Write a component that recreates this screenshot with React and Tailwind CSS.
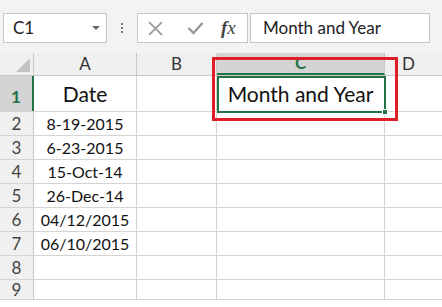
import React from "react";

const font = { fontFamily: "Lato, 'Open Sans', 'Liberation Sans', sans-serif" };

const rows = [
  { n: "1", a: "Date", h: "h-[36px]", big: true },
  { n: "2", a: "8-19-2015" },
  { n: "3", a: "6-23-2015" },
  { n: "4", a: "15-Oct-14" },
  { n: "5", a: "26-Dec-14" },
  { n: "6", a: "04/12/2015" },
  { n: "7", a: "06/10/2015" },
  { n: "8", a: "" },
  { n: "9", a: "", h: "h-[20px]" },
];

export default function App() {
  return (
    <div className="relative w-[442px] h-[307px] bg-white overflow-hidden" style={font}>
      {/* Formula bar */}
      <div className="h-[53px] bg-[#f3f3f3] flex items-start pt-[13px] pl-[3px]">
        <div className="w-[104px] h-[30px] bg-white border border-[#c6c6c6] flex items-center justify-between pl-[9px] pr-[6px]">
          <span className="text-[17px] text-[#222]">C1</span>
          <svg width="8" height="5" viewBox="0 0 8 5"><path d="M0 0 L8 0 L4 4 Z" fill="#666" /></svg>
        </div>
        <div className="w-[30px] h-[30px] flex flex-col items-center justify-center gap-[2px]">
          <span className="w-[2px] h-[2px] bg-[#777]" />
          <span className="w-[2px] h-[2px] bg-[#777]" />
          <span className="w-[2px] h-[2px] bg-[#777]" />
        </div>
        <div className="w-[111px] h-[30px] bg-white border border-[#c6c6c6] flex items-center">
          <svg className="ml-[10px]" width="15" height="15" viewBox="0 0 14 14">
            <path d="M1 1 L13 13 M13 1 L1 13" stroke="#9a9a9a" strokeWidth="1.6" />
          </svg>
          <svg className="ml-[24px]" width="17" height="14" viewBox="0 0 16 14">
            <path d="M1 7 L6 12 L15 2" stroke="#9a9a9a" strokeWidth="2.4" fill="none" />
          </svg>
          <span className="ml-[17px] text-[19px] italic text-[#444]" style={{ fontFamily: "'Liberation Serif', 'DejaVu Serif', serif" }}>
            <span className="font-bold">f</span>x
          </span>
        </div>
        <div className="ml-[2px] w-[180px] h-[30px] bg-white border border-[#c6c6c6] flex items-center pl-[12px]">
          <span className="text-[17px] text-[#222]">Month and Year</span>
        </div>
      </div>

      {/* Grid */}
      <div className="flex flex-col">
        {/* Column headers */}
        <div className="flex h-[23px] bg-[#f0f0f0] border-b border-[#c8c8c8]">
          <div className="w-[34px] border-r border-[#c8c8c8] relative">
            <svg className="absolute right-[3px] bottom-[3px]" width="14" height="14" viewBox="0 0 14 14">
              <path d="M14 0 L14 14 L0 14 Z" fill="#c4c4c4" />
            </svg>
          </div>
          <div className="w-[103px] border-r border-[#c8c8c8] flex items-center justify-center text-[17px] text-[#333]">A</div>
          <div className="w-[80px] border-r border-[#c8c8c8] flex items-center justify-center text-[17px] text-[#333]">B</div>
          <div className="w-[168px] border-r border-[#c8c8c8] bg-[#d4d4d4] border-b-2 border-b-[#217346] flex items-center justify-center text-[17px] font-bold text-[#217346]">C</div>
          <div className="flex-1 flex items-center justify-center text-[17px] text-[#333] pr-[10px]">D</div>
        </div>
        {rows.map((r) => (
          <div key={r.n} className={`flex ${r.h || "h-[24px]"} border-b border-[#d4d4d4]`}>
            <div
              className={`w-[34px] flex ${r.n === "1" ? "items-end pb-[2px]" : "items-center"} justify-center text-[17px] ${
                r.n === "1"
                  ? "bg-[#d4d4d4] text-[#217346] font-bold border-r-2 border-[#217346]"
                  : "bg-[#f0f0f0] text-[#444] border-r border-[#c8c8c8]"
              }`}
            >
              {r.n}
            </div>
            <div className={`w-[103px] border-r border-[#d4d4d4] flex items-center justify-center text-[#111] ${r.big ? "text-[21px]" : "text-[16px]"}`}>
              {r.a}
            </div>
            <div className="w-[80px] border-r border-[#d4d4d4]" />
            <div className="w-[168px] border-r border-[#d4d4d4] flex items-center justify-center text-[21px] text-[#111]">
              {r.n === "1" ? "Month and Year" : ""}
            </div>
            <div className="flex-1" />
          </div>
        ))}
      </div>

      {/* Selection */}
      <div className="absolute left-[217px] top-[76px] w-[169px] h-[37px] border-2 border-[#217346]" />
      <div className="absolute left-[382px] top-[109px] w-[6px] h-[6px] bg-[#217346] border border-white" />
      {/* Red annotation box */}
      <div className="absolute left-[212px] top-[57px] w-[186px] h-[64px] border-[3px] border-[#e01e2a]" />
    </div>
  );
}
